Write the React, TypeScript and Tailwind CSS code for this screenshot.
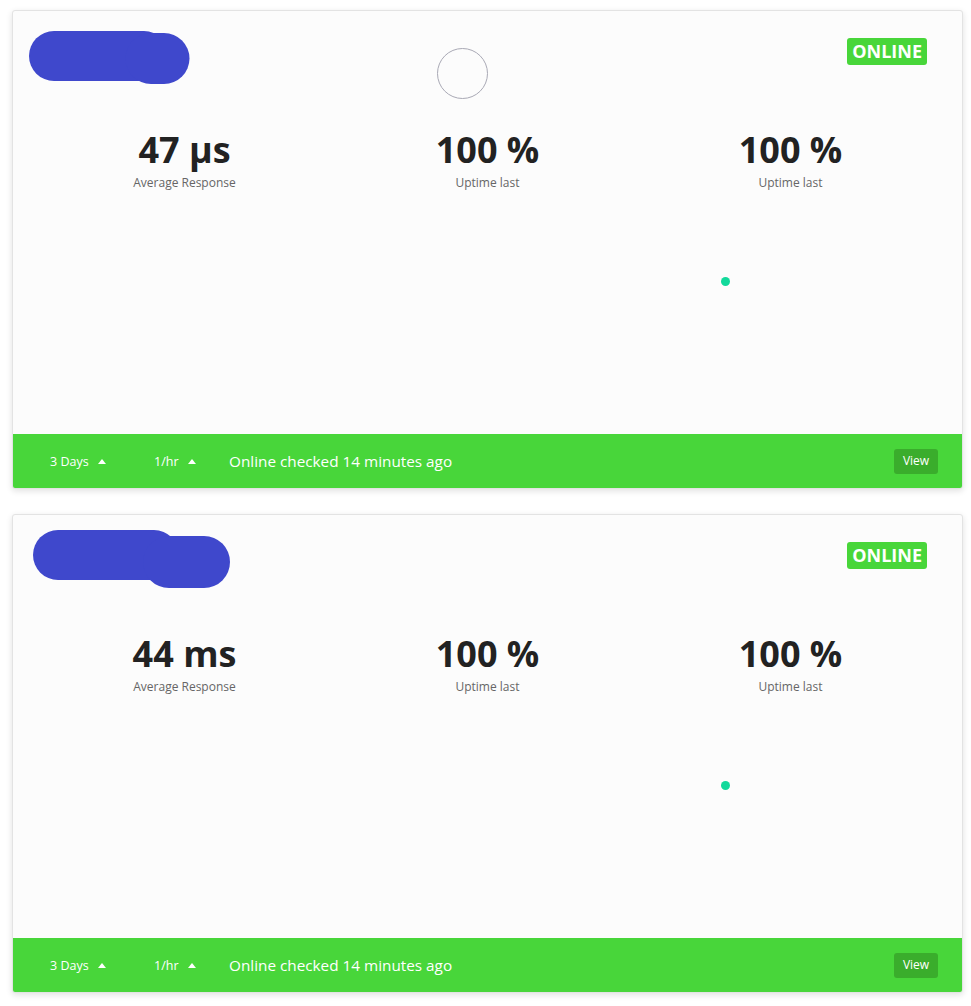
import React from "react";

interface MonitorCardProps {
  response: string;
  blob: "a" | "b";
  loading?: boolean;
}

function Caret() {
  return (
    <svg width="8" height="5" viewBox="0 0 8 5" className="ml-[9px] mb-[2px]">
      <path d="M0 5 L4 0 L8 5 Z" fill="#ffffff" />
    </svg>
  );
}

function Blob({ kind }: { kind: "a" | "b" }) {
  // redaction scribble over the monitor name
  if (kind === "a") {
    return (
      <svg width="165" height="62" viewBox="0 0 165 62" className="block">
        <path d="M25 30 L115 30" stroke="#3f48cc" strokeWidth="50" strokeLinecap="round" fill="none" />
        <path d="M122 32.5 L135 32.5" stroke="#3f48cc" strokeWidth="51" strokeLinecap="round" fill="none" />
      </svg>
    );
  }
  return (
    <svg width="205" height="62" viewBox="0 0 205 62" className="block">
      <path d="M29 25 L125 25" stroke="#3f48cc" strokeWidth="50" strokeLinecap="round" fill="none" />
      <path d="M140 32 L175 32" stroke="#3f48cc" strokeWidth="52" strokeLinecap="round" fill="none" />
    </svg>
  );
}

function Stat({ value, label }: { value: string; label: string }) {
  return (
    <div className="flex flex-col items-center">
      <div className="text-[36px] font-bold leading-[44px] text-[#222222]">{value}</div>
      <div className="text-[12px] leading-[16px] text-[#666666] mt-[3px]">{label}</div>
    </div>
  );
}

function MonitorCard({ response, blob, loading }: MonitorCardProps) {
  return (
    <div className="w-[951px] bg-[#fcfcfc] border border-[#e3e3e3] rounded-[3px] shadow-[0_2px_6px_rgba(0,0,0,0.12)] overflow-hidden">
      <div className="relative h-[423px]">
        <div className="flex items-start justify-between pl-[16px] pr-[35px] pt-[15px] h-[90px]">
          <Blob kind={blob} />
          <div className="mt-[12px] bg-[#48d63a] text-white font-bold text-[18px] leading-[27px] h-[27px] px-[5px] rounded-[3px]">
            ONLINE
          </div>
        </div>
        {loading && (
          <div className="absolute left-[424px] top-[37px] w-[51px] h-[51px] rounded-full border border-[#a9a9b5]" />
        )}
        <div className="grid grid-cols-3 px-[20px] mt-[27px]">
          <Stat value={response} label="Average Response" />
          <Stat value="100 %" label="Uptime last" />
          <Stat value="100 %" label="Uptime last" />
        </div>
        <div className="absolute left-[708px] top-[266px] w-[9px] h-[9px] rounded-full bg-[#12d99b]" />
      </div>
      <div className="h-[54px] bg-[#48d63a] flex items-center pl-[37px] pr-[24px] text-white">
        <div className="flex items-center text-[12.5px] mt-[3px] w-[104px]">
          3 Days
          <Caret />
        </div>
        <div className="flex items-center text-[12.5px] mt-[3px] w-[75px]">
          1/hr
          <Caret />
        </div>
        <div className="text-[15.3px]">Online checked 14 minutes ago</div>
        <div className="ml-auto bg-[#3aad2c] rounded-[3px] text-[12px] h-[25px] w-[44px] flex items-center justify-center">
          View
        </div>
      </div>
    </div>
  );
}

export default function App() {
  return (
    <div
      className="min-h-[1006px] bg-white pt-[10px] pl-[12px] flex flex-col gap-[25px]"
      style={{ fontFamily: '"Open Sans", "Noto Sans", sans-serif' }}
    >
      <MonitorCard response="47 µs" blob="a" loading />
      <MonitorCard response="44 ms" blob="b" />
    </div>
  );
}
